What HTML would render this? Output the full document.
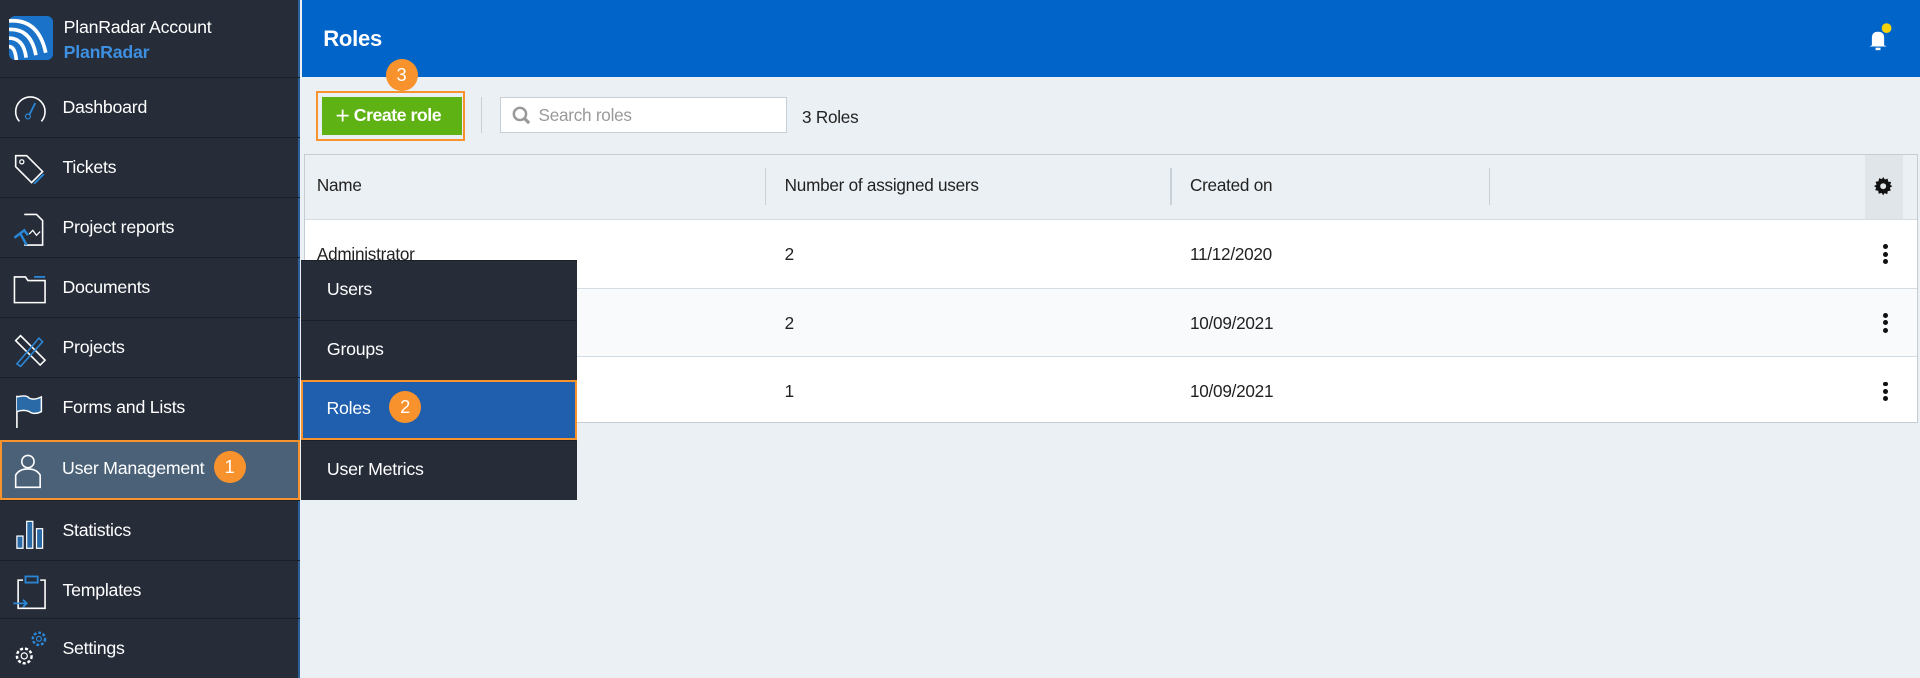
<!DOCTYPE html>
<html><head><meta charset="utf-8"><style>
*{box-sizing:border-box;margin:0;padding:0}
html,body{width:1920px;height:678px;overflow:hidden;background:#ebf0f4}
#w{zoom:1.22449;width:1568px;height:554px;position:relative;font-family:"Liberation Sans",sans-serif;font-size:14px;color:#222;letter-spacing:-0.2px}
.sb{position:absolute;left:0;top:0;width:245px;height:554px;background:#262c38;border-right:2px solid #2f5f99}
.ab{position:absolute}
.mi{position:absolute;left:0;width:245px;height:49px;border-top:1px solid #1c2129;color:#fff;font-size:14.5px;line-height:48px;padding-left:51px}
.mi svg{position:absolute;left:10px;top:11px}
.badge{display:inline-block;width:26px;height:26px;border-radius:50%;background:#f7922c;color:#fff;text-align:center;line-height:26px;font-size:15px;letter-spacing:0}
.sm{position:absolute;left:246px;width:225px;height:49px;background:#262c38;border-top:1px solid #1c2129;color:#fff;font-size:14.5px;line-height:46px;padding-left:21px}
.hd{position:absolute;left:247px;top:0;width:1321px;height:63px;background:#0064c8}
.tb{position:absolute;left:248px;top:126px;width:1318px;border:1px solid #c4ccd4;background:#fff}
.row{position:relative;height:56px;border-top:1px solid #d3dbe3;line-height:56px}
.row span{position:absolute}
.dots{position:absolute;left:1289px;top:20px;width:4px}
.dots i{display:block;width:4px;height:4px;border-radius:2px;background:#111;margin-bottom:2px}
</style></head><body><div id="w">
<div class="sb">
 <svg class="ab" style="left:7px;top:13px" width="36" height="36" viewBox="0 0 36 36"><rect width="36" height="36" rx="5" fill="#1b73c9"/><g fill="none" stroke="#fff" stroke-width="3"><path d="M0 4 Q24 2 30 30"/><path d="M0 11 Q18 10 22 32"/><path d="M0 18 Q12 18 14 34"/><path d="M0 25 Q5 25 6 36"/></g></svg>
 <div class="ab" style="left:52px;top:14px;color:#fff;font-size:14.5px">PlanRadar Account</div>
 <div class="ab" style="left:52px;top:34px;color:#3d8fe0;font-size:14.5px;font-weight:bold">PlanRadar</div>
 <div class="mi" style="top:63px"><svg width="30" height="28"><path d="M6 24 A12 12 0 1 1 24 24" fill="none" stroke="#fff" stroke-width="1.3"/><path d="M14 19 L19 9" stroke="#2a86d6" stroke-width="1.5"/><circle cx="13" cy="20" r="2" fill="none" stroke="#2a86d6"/></svg>Dashboard</div>
 <div class="mi" style="top:112px"><svg width="30" height="28"><path d="M3 3 L12 3 L25 16 L16 25 L3 12 Z" fill="none" stroke="#fff" stroke-width="1.3"/><circle cx="8" cy="8" r="1.7" fill="none" stroke="#fff"/><path d="M26 18 L18 26" stroke="#2a86d6" stroke-width="1.5"/></svg>Tickets</div>
 <div class="mi" style="top:161px"><svg width="30" height="30"><path d="M10 2 L20 2 L25 7 L25 27 L10 27" fill="none" stroke="#fff" stroke-width="1.3"/><path d="M14 18 L17 15 L20 19 L23 16" fill="none" stroke="#fff"/><path d="M2 21 L10 15 L13 19 M7 18 L12 27" stroke="#2a86d6" stroke-width="2" fill="none"/></svg>Project reports</div>
 <div class="mi" style="top:210px"><svg width="30" height="28"><path d="M2 4 L11 4 L13 7 L27 7 L27 25 L2 25 Z" fill="none" stroke="#fff" stroke-width="1.3"/><path d="M18 4 L27 4" stroke="#2a86d6" stroke-width="1.5"/></svg>Documents</div>
 <div class="mi" style="top:259px"><svg width="30" height="30"><path d="M3 7 L7 3 L27 23 L23 27 Z" fill="none" stroke="#fff" stroke-width="1.3"/><path d="M4 26 L22 5 L25 8 L7 28 Z" fill="none" stroke="#2a86d6" stroke-width="1.3"/></svg>Projects</div>
 <div class="mi" style="top:308px"><svg width="30" height="30"><path d="M4 3 L4 30" stroke="#fff" stroke-width="1.3"/><path d="M4 4 Q12 2 14 5 Q18 7 24 4 L24 16 Q18 19 14 16 Q10 14 4 16" fill="#2a6aa6" stroke="#fff" stroke-width="1.2"/></svg>Forms and Lists</div>
 <div class="mi" style="top:359px;background:#4a6178;border:2px solid #f7922c;line-height:44px;padding-left:49px"><svg width="30" height="30" style="left:8px;top:9px"><circle cx="13" cy="7" r="5" fill="none" stroke="#fff" stroke-width="1.3"/><path d="M3 28 L3 18 Q6 13 13 13 Q20 13 23 18 L23 28 Z" fill="none" stroke="#fff" stroke-width="1.3"/></svg>User Management&nbsp;&nbsp;<span class="badge" style="vertical-align:middle;margin-top:-3px">1</span></div>
 <div class="mi" style="top:408px"><svg width="30" height="30"><rect x="4" y="18" width="5" height="10" fill="#2a6aa6" stroke="#fff"/><rect x="12" y="6" width="5" height="22" fill="#2a6aa6" stroke="#fff"/><rect x="20" y="12" width="5" height="16" fill="#2a6aa6" stroke="#fff"/></svg>Statistics</div>
 <div class="mi" style="top:457px"><svg width="30" height="32"><path d="M9 5 L5 5 L5 28 L27 28 L27 5 L23 5" fill="none" stroke="#fff" stroke-width="1.3"/><rect x="11" y="2" width="10" height="5" fill="none" stroke="#2a86d6" stroke-width="1.5"/><path d="M1 24 L12 24 M9 21 L12 24 L9 27" fill="none" stroke="#2a86d6" stroke-width="1.5"/></svg>Templates</div>
 <div class="mi" style="top:505px"><svg width="30" height="32" style="top:8px"><circle cx="10" cy="22" r="6" fill="none" stroke="#fff" stroke-width="2" stroke-dasharray="2.5 1.6"/><circle cx="10" cy="22" r="2.5" fill="none" stroke="#fff"/><circle cx="22" cy="8" r="5" fill="none" stroke="#2a86d6" stroke-width="2" stroke-dasharray="2.3 1.5"/><circle cx="22" cy="8" r="2" fill="none" stroke="#2a86d6"/></svg>Settings</div>
</div>
<div class="hd"><div class="ab" style="left:17px;top:21px;color:#fff;font-size:18px;font-weight:bold">Roles</div>
 <svg class="ab" style="left:1278px;top:18px" width="24" height="24" viewBox="0 0 24 24"><path d="M4 19 L4 13 Q4 8 9 8 Q14 8 14 13 L14 19 L16 20 L2 20 Z" fill="#fff"/><rect x="7" y="21" width="4" height="2" fill="#fff"/><circle cx="16" cy="5" r="4" fill="#f5d20a"/></svg>
</div>
<div class="ab" style="left:258px;top:74px;width:122px;height:41px;border:2px solid #f7922c"></div>
<div class="ab" style="left:263px;top:79px;width:114px;height:31px;background:#5fb213;color:#fff;font-weight:bold;font-size:14.5px;line-height:31px;padding-left:11px;letter-spacing:-0.4px"><span style="font-weight:normal;font-size:20px;vertical-align:-2px">+</span> Create role</div>
<span class="badge ab" style="left:315px;top:48px">3</span>
<div class="ab" style="left:393px;top:79px;width:1px;height:30px;background:#c8d0d8"></div>
<div class="ab" style="left:408px;top:79px;width:235px;height:30px;background:#fff;border:1px solid #c6ced6;color:#999;font-size:14px;line-height:28px;padding-left:31px">Search roles
 <svg class="ab" style="left:9px;top:7px" width="16" height="16"><circle cx="6.5" cy="6.5" r="5" fill="none" stroke="#999" stroke-width="2"/><path d="M10 10 L14 14" stroke="#999" stroke-width="2.5"/></svg></div>
<div class="ab" style="left:655px;top:87px;font-size:14px">3 Roles</div>
<div class="tb">
 <div style="position:relative;height:52px;background:#ebf0f4;line-height:50px;font-size:14px">
  <span class="ab" style="left:10px">Name</span>
  <div class="ab" style="left:376px;top:10px;width:1px;height:31px;background:#c8d0d8"></div>
  <span class="ab" style="left:392px">Number of assigned users</span>
  <div class="ab" style="left:707px;top:10px;width:1px;height:31px;background:#c8d0d8"></div>
  <span class="ab" style="left:723px">Created on</span>
  <div class="ab" style="left:967px;top:10px;width:1px;height:31px;background:#c8d0d8"></div>
  <div class="ab" style="left:1274px;top:0;width:31px;height:52px;background:#e0e5e9"></div>
  <svg class="ab" style="left:1282px;top:18px" width="15" height="15" viewBox="0 0 16 16"><path fill="#111" d="M8 0l1.4 2.2 2.5-.8.4 2.6 2.6.4-.8 2.5L16 8l-2.2 1.4.8 2.5-2.6.4-.4 2.6-2.5-.8L8 16l-1.4-2.2-2.5.8-.4-2.6-2.6-.4.8-2.5L0 8l2.2-1.4-.8-2.5 2.6-.4.4-2.6 2.5.8z"/><circle cx="8" cy="8" r="2.6" fill="#e0e5e9"/></svg>
 </div>
 <div class="row"><span style="left:10px">Administrator</span><span style="left:392px">2</span><span style="left:723px">11/12/2020</span><div class="dots"><i></i><i></i><i></i></div></div>
 <div class="row" style="background:#f8fafc"><span style="left:392px">2</span><span style="left:723px">10/09/2021</span><div class="dots"><i></i><i></i><i></i></div></div>
 <div class="row" style="height:54px"><span style="left:392px">1</span><span style="left:723px">10/09/2021</span><div class="dots"><i></i><i></i><i></i></div></div>
</div>
<div class="sm" style="top:212px">Users</div>
<div class="sm" style="top:261px">Groups</div>
<div class="sm" style="top:310px;background:#1f5fad;border:2px solid #f7922c;padding-left:19px;line-height:43px">Roles&nbsp;&nbsp;&nbsp;&nbsp;<span class="badge" style="vertical-align:middle;margin-top:-3px">2</span></div>
<div class="sm" style="top:359px">User Metrics</div>
</div></body></html>
